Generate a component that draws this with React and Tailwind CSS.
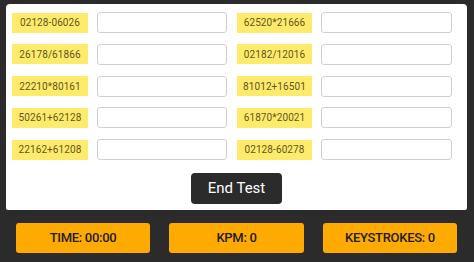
import { useState } from "react";

const problems = [
  ["02128-06026", "62520*21666"],
  ["26178/61866", "02182/12016"],
  ["22210*80161", "81012+16501"],
  ["50261+62128", "61870*20021"],
  ["22162+61208", "02128-60278"],
];

function Cell({ label, value, onChange, labelW, inputW }) {
  return (
    <div className="flex items-center gap-[9px]">
      <div
        className={`${labelW} h-[20px] bg-[#ffeb6b] text-[#5f5622] text-[10px] tracking-[0.1px] flex items-center justify-center`}
      >
        {label}
      </div>
      <input
        type="text"
        value={value}
        onChange={onChange}
        className={`${inputW} h-[21px] bg-white border border-[#cfcfcf] rounded-[3px] outline-none px-1 text-[11px]`}
      />
    </div>
  );
}

export default function App() {
  const [answers, setAnswers] = useState({});

  const update = (key) => (e) =>
    setAnswers({ ...answers, [key]: e.target.value });

  return (
    <div
      className="w-[474px] h-[262px] bg-[#2b2b2b] flex flex-col"
      style={{ fontFamily: "Roboto, 'Liberation Sans', sans-serif" }}
    >
      <div className="ml-[6px] mt-[4px] w-[461px] h-[206px] bg-white rounded-t-[4px] rounded-b-[2px] flex flex-col pt-[8px] pl-[6px] pb-[6px]">
        <div className="flex flex-col gap-[10.75px]">
          {problems.map((row, i) => (
            <div key={i} className="flex gap-[10px]">
              <Cell
                label={row[0]}
                value={answers[`l${i}`] || ""}
                onChange={update(`l${i}`)}
                labelW="w-[76px]"
                inputW="w-[130px]"
              />
              <Cell
                label={row[1]}
                value={answers[`r${i}`] || ""}
                onChange={update(`r${i}`)}
                labelW="w-[75px]"
                inputW="w-[131px]"
              />
            </div>
          ))}
        </div>
        <div className="flex justify-center mt-auto pr-[6px]">
          <button className="w-[91px] h-[31px] bg-[#2b2b2b] text-white text-[15px] font-normal rounded-[4px]">
            End Test
          </button>
        </div>
      </div>
      <div className="flex gap-[19px] pl-[16px] pt-[13px]">
        <div className="w-[134px] h-[30px] bg-[#ffaa00] rounded-[3px] flex items-center justify-center text-[13px] font-medium text-[#1c1c1c] tracking-[-0.3px]">
          TIME: 00:00
        </div>
        <div className="w-[135px] h-[30px] bg-[#ffaa00] rounded-[3px] flex items-center justify-center text-[13px] font-medium text-[#1c1c1c] tracking-[-0.3px]">
          KPM: 0
        </div>
        <div className="w-[134px] h-[30px] bg-[#ffaa00] rounded-[3px] flex items-center justify-center text-[13px] font-medium text-[#1c1c1c] tracking-[-0.3px]">
          KEYSTROKES: 0
        </div>
      </div>
    </div>
  );
}
